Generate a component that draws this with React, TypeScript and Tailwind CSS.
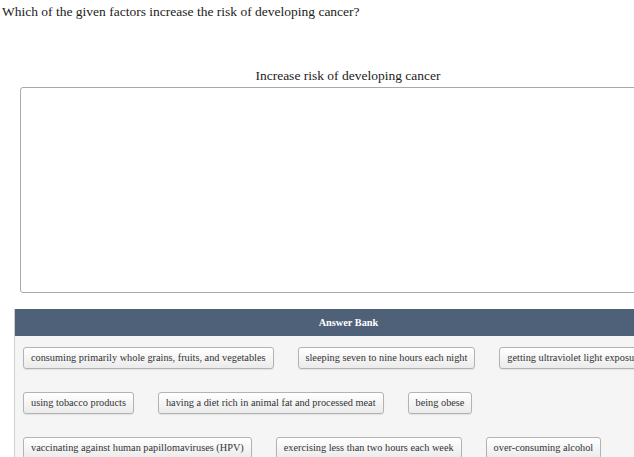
const rows: string[][] = [
  [
    "consuming primarily whole grains, fruits, and vegetables",
    "sleeping seven to nine hours each night",
    "getting ultraviolet light exposure",
  ],
  ["using tobacco products", "having a diet rich in animal fat and processed meat", "being obese"],
  [
    "vaccinating against human papillomaviruses (HPV)",
    "exercising less than two hours each week",
    "over-consuming alcohol",
  ],
];

function Chip({ label }: { label: string }) {
  return (
    <div className="h-[22px] shrink-0 whitespace-nowrap rounded-[3px] border border-[#b3b3b3] bg-gradient-to-b from-white to-[#ebebeb] px-[7px] text-[10.3px] leading-[20px] text-[#333] shadow-[0_1px_1px_rgba(0,0,0,0.08)]">
      {label}
    </div>
  );
}

export default function App() {
  return (
    <div className="h-[457px] w-[634px] overflow-hidden bg-white font-[family-name:'Liberation_Serif',serif] text-[#222]">
      <div className="w-[700px]">
        <p className="pl-[2px] pt-[4px] text-[13.5px] leading-[16px]">
          Which of the given factors increase the risk of developing cancer?
        </p>

        <div className="ml-[20px] mt-[48px] w-[656px]">
          <div className="text-center text-[13.5px] leading-[16px]">Increase risk of developing cancer</div>
          <div className="mt-[3px] h-[206px] rounded-[3px] border border-[#aaaaaa] bg-white" />
        </div>

        <div className="ml-[14px] mt-[16px] w-[668px] border-l border-[#d0d0d0] bg-[#f5f5f5]">
          <div className="flex h-[27px] items-center justify-center bg-[#4f6179] text-[10.3px] font-bold text-white">
            Answer Bank
          </div>
          <div className="flex flex-col gap-[23px] px-[8px] pt-[11px] pb-[10px]">
            {rows.map((row, i) => (
              <div key={i} className="flex gap-[24px]">
                {row.map((c) => (
                  <Chip key={c} label={c} />
                ))}
              </div>
            ))}
          </div>
        </div>
      </div>
    </div>
  );
}
